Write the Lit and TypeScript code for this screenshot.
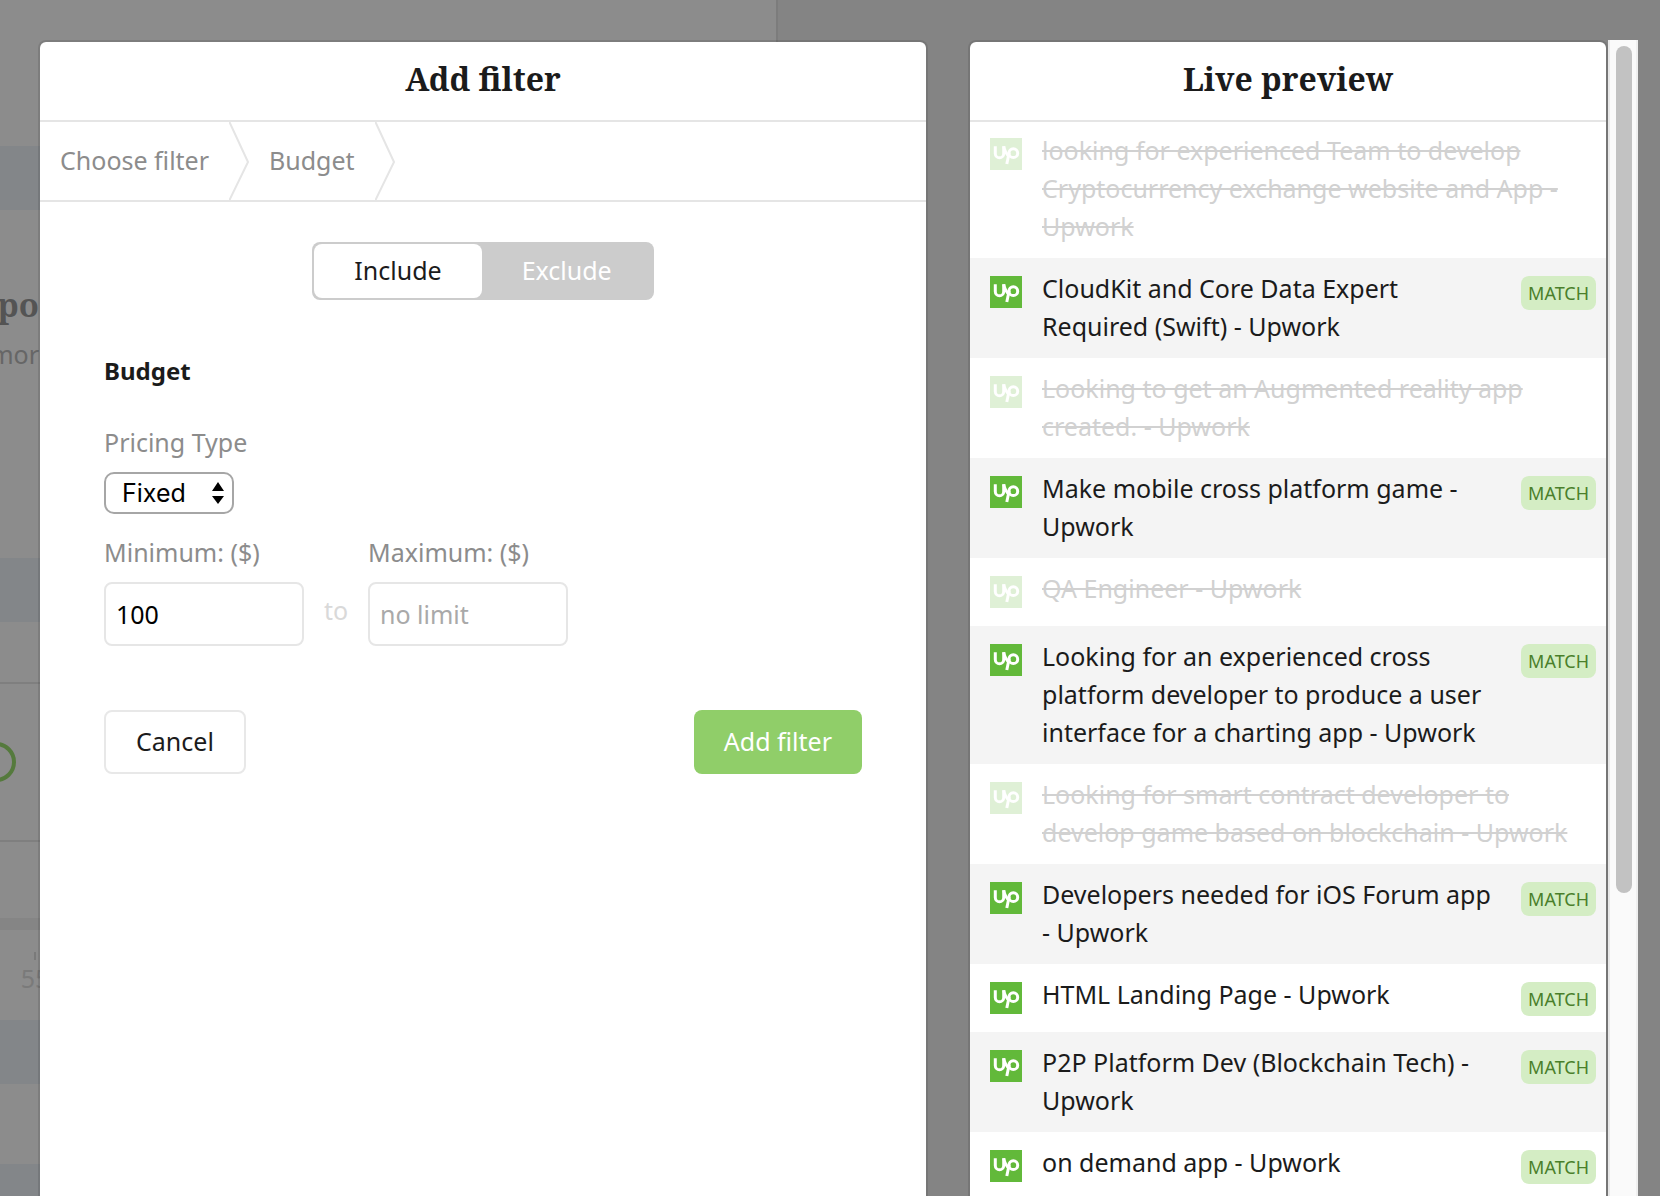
import { LitElement, html, css, svg } from "lit";
import { customElement, state } from "lit/decorators.js";
import { classMap } from "lit/directives/class-map.js";

interface Job {
  lines: string[];
  match: boolean;
}

const JOBS: Job[] = [
  { lines: ["looking for experienced Team to develop", "Cryptocurrency exchange website and App -", "Upwork"], match: false },
  { lines: ["CloudKit and Core Data Expert", "Required (Swift) - Upwork"], match: true },
  { lines: ["Looking to get an Augmented reality app", "created. - Upwork"], match: false },
  { lines: ["Make mobile cross platform game -", "Upwork"], match: true },
  { lines: ["QA Engineer - Upwork"], match: false },
  { lines: ["Looking for an experienced cross", "platform developer to produce a user", "interface for a charting app - Upwork"], match: true },
  { lines: ["Looking for smart contract developer to", "develop game based on blockchain - Upwork"], match: false },
  { lines: ["Developers needed for iOS Forum app", "- Upwork"], match: true },
  { lines: ["HTML Landing Page - Upwork"], match: true },
  { lines: ["P2P Platform Dev (Blockchain Tech) -", "Upwork"], match: true },
  { lines: ["on demand app - Upwork"], match: true },
];

const logoMark = svg`
  <rect width="32" height="32" fill="#62b93a"></rect>
  <g fill="none" stroke="#fff" stroke-width="3">
    <path d="M5.3 8.3v7.100a4.200 4.400 0 0 0 8.400 0V8.300"></path>
    <path d="M13.700 8.300c.8 4.200 2.900 8.200 5.700 10.300"></path>
    <circle cx="23.300" cy="15.200" r="4.400"></circle>
    <path d="M19.200 14.500 16.800 26"></path>
  </g>`;

@customElement("page-backdrop")
export class PageBackdrop extends LitElement {
  static styles = css`
    :host {
      display: grid;
      grid-template-columns: 778fr 882fr;
      background: #848484;
      font: 25px/38px "Noto Sans", sans-serif;
      color: #666;
    }
    .main {
      display: flex;
      flex-direction: column;
      border-right: 2px solid #7c7c7c;
      background: #8c8c8c;
    }
    .main > * { flex: none; box-sizing: border-box; }
    .top { height: 146px; }
    .blue { height: 64px; background: #838689; }
    .intro { height: 348px; width: 39px; padding-top: 76px; display: flex; flex-direction: column; align-items: flex-end; }
    .title { font: bold 33px/38px "Noto Serif", serif; color: #545454; }
    .more { padding-top: 11px; }
    .row { height: 60px; }
    .ringed { height: 160px; display: flex; align-items: center; border-top: 2px solid #7f7f7f; border-bottom: 2px solid #7f7f7f; }
    .ring { width: 40px; height: 40px; margin-left: -24px; box-sizing: border-box; border: 4px solid #557a3d; border-radius: 50%; }
    .plain { height: 76px; }
    .band { height: 12px; background: #858585; }
    .scale { height: 90px; width: 70px; padding-top: 22px; display: flex; flex-direction: column; align-items: center; color: #7a7a7a; line-height: 36px; }
    .tick { width: 2px; height: 8px; background: #7a7a7a; }
    .gap { height: 80px; }
  `;
  render() {
    return html`
      <div class="main">
        <div class="top"></div>
        <div class="blue"></div>
        <div class="intro"><span class="title">po</span><span class="more">mor</span></div>
        <div class="blue"></div>
        <div class="row"></div>
        <div class="ringed"><span class="ring"></span></div>
        <div class="plain"></div>
        <div class="band"></div>
        <div class="scale"><span class="tick"></span><span>55</span></div>
        <div class="blue"></div>
        <div class="gap"></div>
        <div class="blue"></div>
      </div>`;
  }
}

@customElement("filter-form")
export class FilterForm extends LitElement {
  @state() private mode = "Include";

  static styles = css`
    :host { display: block; }
    button, input, select { font: inherit; margin: 0; box-sizing: border-box; }
    .crumbs {
      display: flex;
      height: 78px;
      margin: 0;
      padding: 0;
      list-style: none;
      border-bottom: 2px solid #e5e5e5;
    }
    .crumb { display: flex; align-items: center; padding-left: 20px; gap: 20px; }
    .crumb a { padding-bottom: 2px; color: #8c8c8c; text-decoration: none; }
    .chevron { display: block; width: 20px; height: 78px; fill: none; stroke: #e5e5e5; stroke-width: 2; }
    .body { display: flex; flex-direction: column; padding: 40px 64px; }
    .toggle {
      align-self: center;
      display: flex;
      padding: 2px;
      border-radius: 8px;
      background: #ccc;
    }
    .option { height: 54px; padding: 0 40px 2px; border: 0; border-radius: 8px; background: none; color: #fff; }
    .option.on { background: #fff; color: #1b1b1b; }
    h3 { margin: 52px 0 33px; font-size: 24px; line-height: 38px; color: #1b1b1b; }
    form { display: flex; flex-direction: column; gap: 19px; }
    .field { display: flex; flex-direction: column; align-items: flex-start; gap: 11px; }
    label { color: #8c8c8c; }
    .select { display: grid; align-items: center; }
    .select > * { grid-area: 1 / 1; }
    select {
      appearance: none;
      width: 130px;
      height: 42px;
      padding: 0 16px;
      border: 2px solid #a6a6a6;
      border-radius: 10px;
      background: #fff;
      font-family: Inter, sans-serif;
      color: #000;
    }
    .arrows { justify-self: end; width: 12px; height: 24px; margin-right: 10px; pointer-events: none; }
    .range { display: flex; align-items: flex-end; gap: 20px; }
    input {
      width: 200px;
      height: 64px;
      padding: 0 10px;
      border: 2px solid #e6e6e6;
      border-radius: 8px;
      background: #fff;
      color: #000;
    }
    input::placeholder { color: #a9a9a9; opacity: 1; }
    .to { width: 24px; padding-bottom: 17px; text-align: center; color: #d9d9d9; }
    .actions { display: flex; justify-content: space-between; margin-top: 45px; }
    .button { height: 64px; padding: 0 30px 2px; border: 2px solid #e8e8e8; border-radius: 8px; background: #fff; color: #1b1b1b; }
    .primary { border: 0; background: #90ce69; color: #fff; }
  `;

  private crumb(name: string) {
    return html`
      <li class="crumb">
        <a href="#">${name}</a>
        <svg class="chevron" viewBox="0 0 20 78" aria-hidden="true"><path d="M0-1 19 40 0 79"></path></svg>
      </li>`;
  }

  render() {
    return html`
      <ol class="crumbs">${["Choose filter", "Budget"].map((n) => this.crumb(n))}</ol>
      <div class="body">
        <div class="toggle" role="group">
          ${["Include", "Exclude"].map(
            (name) => html`<button
              type="button"
              class=${classMap({ option: true, on: this.mode === name })}
              aria-pressed=${this.mode === name}
              @click=${() => (this.mode = name)}
            >${name}</button>`
          )}
        </div>
        <h3>Budget</h3>
        <form @submit=${(e: Event) => e.preventDefault()}>
          <div class="field">
            <label for="pricing">Pricing Type</label>
            <div class="select">
              <select id="pricing"><option>Fixed</option></select>
              <svg class="arrows" viewBox="0 0 12 24" aria-hidden="true"><path d="M0 10 6 1l6 9zM0 15h12l-6 8z"></path></svg>
            </div>
          </div>
          <div class="range">
            <div class="field">
              <label for="min">Minimum: ($)</label>
              <input id="min" type="text" inputmode="numeric" value="100" />
            </div>
            <span class="to">to</span>
            <div class="field">
              <label for="max">Maximum: ($)</label>
              <input id="max" type="text" inputmode="numeric" placeholder="no limit" />
            </div>
          </div>
          <div class="actions">
            <button type="button" class="button">Cancel</button>
            <button type="submit" class="button primary">Add filter</button>
          </div>
        </form>
      </div>`;
  }
}

@customElement("job-list")
export class JobList extends LitElement {
  static styles = css`
    :host { display: block; }
    .list { margin: -2px 0 0; padding: 0; list-style: none; }
    .job { display: flex; align-items: flex-start; padding: 11px 10px 13px 20px; color: #1b1b1b; }
    .job:nth-child(even) { background: #f4f4f4; }
    .logo { flex: none; width: 32px; height: 32px; margin: 7px 20px 5px 0; }
    .name { flex: 1; white-space: nowrap; }
    .muted .logo { opacity: 0.2; }
    .muted .name { color: #d1d1d1; text-decoration: line-through; text-decoration-thickness: 2px; }
    .badge {
      margin: 7px 0 3px;
      padding: 0 7px;
      border-radius: 8px;
      background: #d4edc4;
      color: #4a7f2b;
      font-size: 18px;
      line-height: 34px;
    }
  `;
  render() {
    return html`
      <ul class="list">
        ${JOBS.map(
          (job) => html`
            <li class=${classMap({ job: true, muted: !job.match })}>
              <svg class="logo" viewBox="0 0 32 32" aria-hidden="true">${logoMark}</svg>
              <span class="name">${job.lines.map((line, i) => (i ? html`<br />${line}` : line))}</span>
              ${job.match ? html`<span class="badge">MATCH</span>` : null}
            </li>`
        )}
      </ul>`;
  }
}

@customElement("app-root")
export class AppRoot extends LitElement {
  static styles = css`
    :host {
      display: grid;
      height: 100vh;
      overflow: hidden;
      font: 25px/38px "Noto Sans", sans-serif;
    }
    .backdrop, .overlay { grid-area: 1 / 1; min-height: 0; min-width: 0; overflow: hidden; }
    .overlay {
      position: relative;
      display: grid;
      grid-template-columns: 89fr 40px 64fr 30px;
      padding: 40px 22px 0 38px;
    }
    .panel {
      min-width: 0;
      min-height: 0;
      overflow: hidden;
      border: 2px solid rgba(0, 0, 0, 0.1);
      border-bottom: 0;
      border-radius: 8px 8px 0 0;
      background: #fff;
      background-clip: padding-box;
    }
    .preview { grid-column: 3; }
    h2 {
      margin: 0;
      padding-bottom: 4px;
      border-bottom: 2px solid #e5e5e5;
      font: bold 32px/74px "Noto Serif", serif;
      text-align: center;
      color: #1b1b1b;
    }
    .track {
      box-sizing: border-box;
      display: flex;
      flex-direction: column;
      padding: 6px 4px 0 6px;
      border-left: 2px solid #e8e8e8;
      border-right: 2px solid #efefef;
      background: #fafafa;
    }
    .thumb { width: 16px; flex: 14; border-radius: 8px; background: #c2c2c2; }
    .rest { flex: 5; }
  `;
  render() {
    return html`
      <page-backdrop class="backdrop" aria-hidden="true"></page-backdrop>
      <div class="overlay">
        <section class="panel">
          <h2>Add filter</h2>
          <filter-form></filter-form>
        </section>
        <section class="panel preview">
          <h2>Live preview</h2>
          <job-list></job-list>
        </section>
        <div class="track"><div class="thumb"></div><div class="rest"></div></div>
      </div>`;
  }
}
